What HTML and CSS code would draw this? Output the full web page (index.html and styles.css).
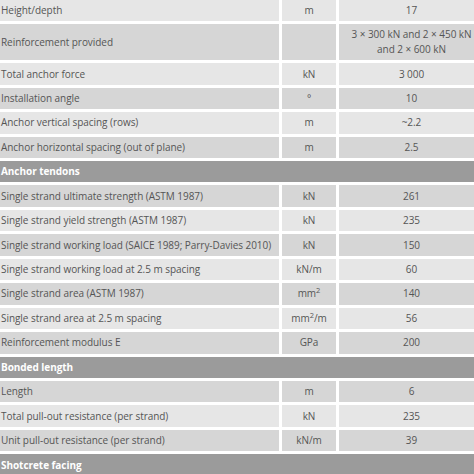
FILE: index.html
```html
<!DOCTYPE html>
<html>
<head>
<meta charset="utf-8">
<link rel="stylesheet" href="styles.css">
</head>
<body>
<div class="sheet">
  <div class="c l a">Height/depth</div><div class="c u a">m</div><div class="c v a">17</div>
  <div class="c l b">Reinforcement provided</div><div class="c u b"></div><div class="c v b two">3 × 300 kN and 2 × 450 kN<br>and 2 × 600 kN</div>
  <div class="c l a">Total anchor force</div><div class="c u a">kN</div><div class="c v a">3 000</div>
  <div class="c l b">Installation angle</div><div class="c u b">°</div><div class="c v b">10</div>
  <div class="c l a">Anchor vertical spacing (rows)</div><div class="c u a">m</div><div class="c v a">~2.2</div>
  <div class="c l b">Anchor horizontal spacing (out of plane)</div><div class="c u b">m</div><div class="c v b">2.5</div>
  <div class="c head">Anchor tendons</div>
  <div class="c l b">Single strand ultimate strength (ASTM 1987)</div><div class="c u b">kN</div><div class="c v b">261</div>
  <div class="c l a">Single strand yield strength (ASTM 1987)</div><div class="c u a">kN</div><div class="c v a">235</div>
  <div class="c l b">Single strand working load (SAICE 1989; Parry-Davies 2010)</div><div class="c u b">kN</div><div class="c v b">150</div>
  <div class="c l a">Single strand working load at 2.5 m spacing</div><div class="c u a">kN/m</div><div class="c v a">60</div>
  <div class="c l b">Single strand area (ASTM 1987)</div><div class="c u b"><span>mm<sup>2</sup></span></div><div class="c v b">140</div>
  <div class="c l a">Single strand area at 2.5 m spacing</div><div class="c u a"><span>mm<sup>2</sup>/m</span></div><div class="c v a">56</div>
  <div class="c l b">Reinforcement modulus E</div><div class="c u b">GPa</div><div class="c v b">200</div>
  <div class="c head">Bonded length</div>
  <div class="c l b">Length</div><div class="c u b">m</div><div class="c v b">6</div>
  <div class="c l a">Total pull-out resistance (per strand)</div><div class="c u a">kN</div><div class="c v a">235</div>
  <div class="c l b">Unit pull-out resistance (per strand)</div><div class="c u b">kN/m</div><div class="c v b">39</div>
  <div class="c head">Shotcrete facing</div>
</div>
</body>
</html>
```
FILE: styles.css
```css
html, body {
  margin: 0;
  padding: 0;
  background: #ffffff;
  overflow: hidden;
}
.sheet {
  display: grid;
  grid-template-columns: 283px 54px 145px;
  gap: 3px;
  margin-left: -4px;
  margin-top: -0.6px;
  font-family: "Open Sans", Lato, sans-serif;
  font-size: 10px;
  letter-spacing: -0.05px;
  color: #555555;
}
.c {
  display: flex;
  flex-direction: column;
  justify-content: center;
  line-height: 15px;
  padding: 3.22px 0;
  white-space: nowrap;
}
.l {
  padding-left: 5px;
  text-align: left;
}
.u, .v {
  text-align: center;
}
.a { background: #e6e6e6; }
.b { background: #d6d6d6; }
.head {
  grid-column: 1 / 4;
  background: #9b9b9b;
  color: #ffffff;
  font-weight: bold;
  padding-left: 5px;
}
sup {
  font-size: 7.5px;
  line-height: 0;
  vertical-align: 4px;
}
```
